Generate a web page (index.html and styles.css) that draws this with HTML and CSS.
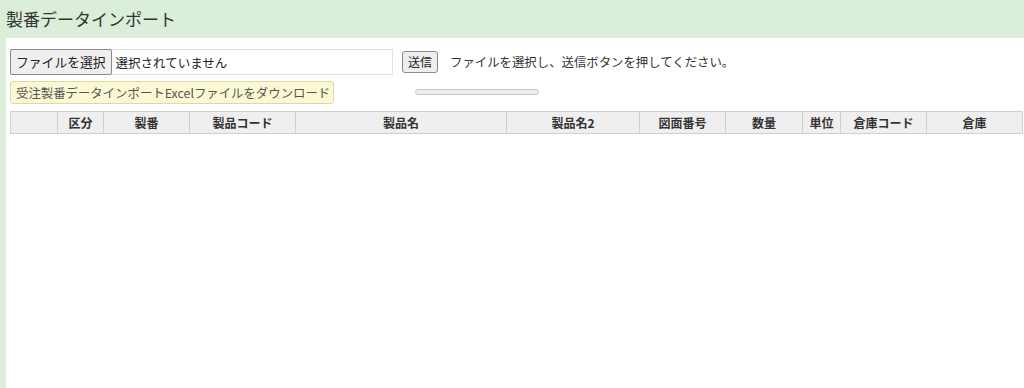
FILE: index.html
```html
<html lang="ja">

<head>
    <meta charset="utf-8" />
    <title>製番データインポート</title>
    <link rel="stylesheet" href="styles.css">
</head>

<body>
<h1 class="titre">製番データインポート</h1>

<div class="panneau">

    <div class="ligne envoi">
        <div class="fichier">
            <span class="btn-fichier">ファイルを選択</span>
            <span class="nom-fichier">選択されていません</span>
        </div>
        <button class="btn-envoi">送信</button>
        <span class="aide">ファイルを選択し、送信ボタンを押してください。</span>
    </div>

    <div class="ligne">
        <button class="btn-dl">受注製番データインポートExcelファイルをダウンロード</button>
        <div class="progres"></div>
    </div>

    <table class="liste">
        <colgroup>
            <col style="width:47px">
            <col style="width:46px">
            <col style="width:86px">
            <col style="width:106px">
            <col style="width:211px">
            <col style="width:133px">
            <col style="width:86px">
            <col style="width:77px">
            <col style="width:38px">
            <col style="width:86px">
            <col style="width:96px">
        </colgroup>
        <thead>
            <tr>
                <th></th>
                <th>区分</th>
                <th>製番</th>
                <th>製品コード</th>
                <th>製品名</th>
                <th>製品名2</th>
                <th>図面番号</th>
                <th>数量</th>
                <th>単位</th>
                <th>倉庫コード</th>
                <th>倉庫</th>
            </tr>
        </thead>
    </table>

</div>

</body>
</html>
```

FILE: styles.css
```css
body {
    margin: 0;
    background: #daeeda;
    font-family: "Noto Sans CJK JP", "Noto Sans", sans-serif;
    color: #333;
}

h1.titre {
    margin: 0;
    padding: 7px 6px 0 6px;
    height: 31px;
    font-size: 17px;
    font-weight: normal;
    line-height: 24px;
    color: #333;
}

div.panneau {
    margin-left: 6px;
    min-height: 350px;
    padding: 11px 2px 0 4px;
    background: white;
}

div.ligne {
    display: flex;
    align-items: center;
}

div.envoi {
    height: 26px;
}

div.fichier {
    display: flex;
    align-items: center;
    width: 383px;
    height: 26px;
    box-sizing: border-box;
    border: 1px solid #e2e2e2;
    border-left: none;
}

span.btn-fichier {
    display: inline-block;
    height: 26px;
    box-sizing: border-box;
    padding: 0 5px;
    border: 1px solid #8a8a8a;
    border-radius: 2px;
    background: #efefef;
    font-size: 12.8px;
    line-height: 24px;
    color: #222;
}

span.nom-fichier {
    margin-left: 4px;
    font-size: 12.5px;
    color: #222;
}

button.btn-envoi {
    margin-left: 9px;
    height: 22px;
    padding: 0 5px;
    border: 1px solid #8a8a8a;
    border-radius: 3px;
    background: #efefef;
    font-family: inherit;
    font-size: 12px;
    line-height: 18px;
    color: #222;
}

span.aide {
    margin-left: 12px;
    font-size: 12.4px;
    color: #333;
}

button.btn-dl {
    margin-top: 6px;
    height: 23px;
    width: 324px;
    padding: 0 5px;
    border: 1px solid #dcd9a8;
    border-radius: 3px;
    background: #fbf9d3;
    font-family: inherit;
    font-size: 12.4px;
    line-height: 20px;
    color: #555;
    text-align: left;
    white-space: nowrap;
}

div.progres {
    margin-left: 81px;
    margin-top: 5px;
    width: 124px;
    height: 6px;
    box-sizing: border-box;
    border: 1px solid #c8c8c8;
    border-radius: 4px;
    background: #eeeeee;
}

table.liste {
    margin-top: 7px;
    width: 1012px;
    table-layout: fixed;
    border-collapse: collapse;
}

table.liste th {
    height: 22px;
    box-sizing: border-box;
    padding: 0;
    border: 1px solid #cfcfcf;
    background: #efefef;
    font-size: 12px;
    font-weight: bold;
    color: #333;
    text-align: center;
}
```
